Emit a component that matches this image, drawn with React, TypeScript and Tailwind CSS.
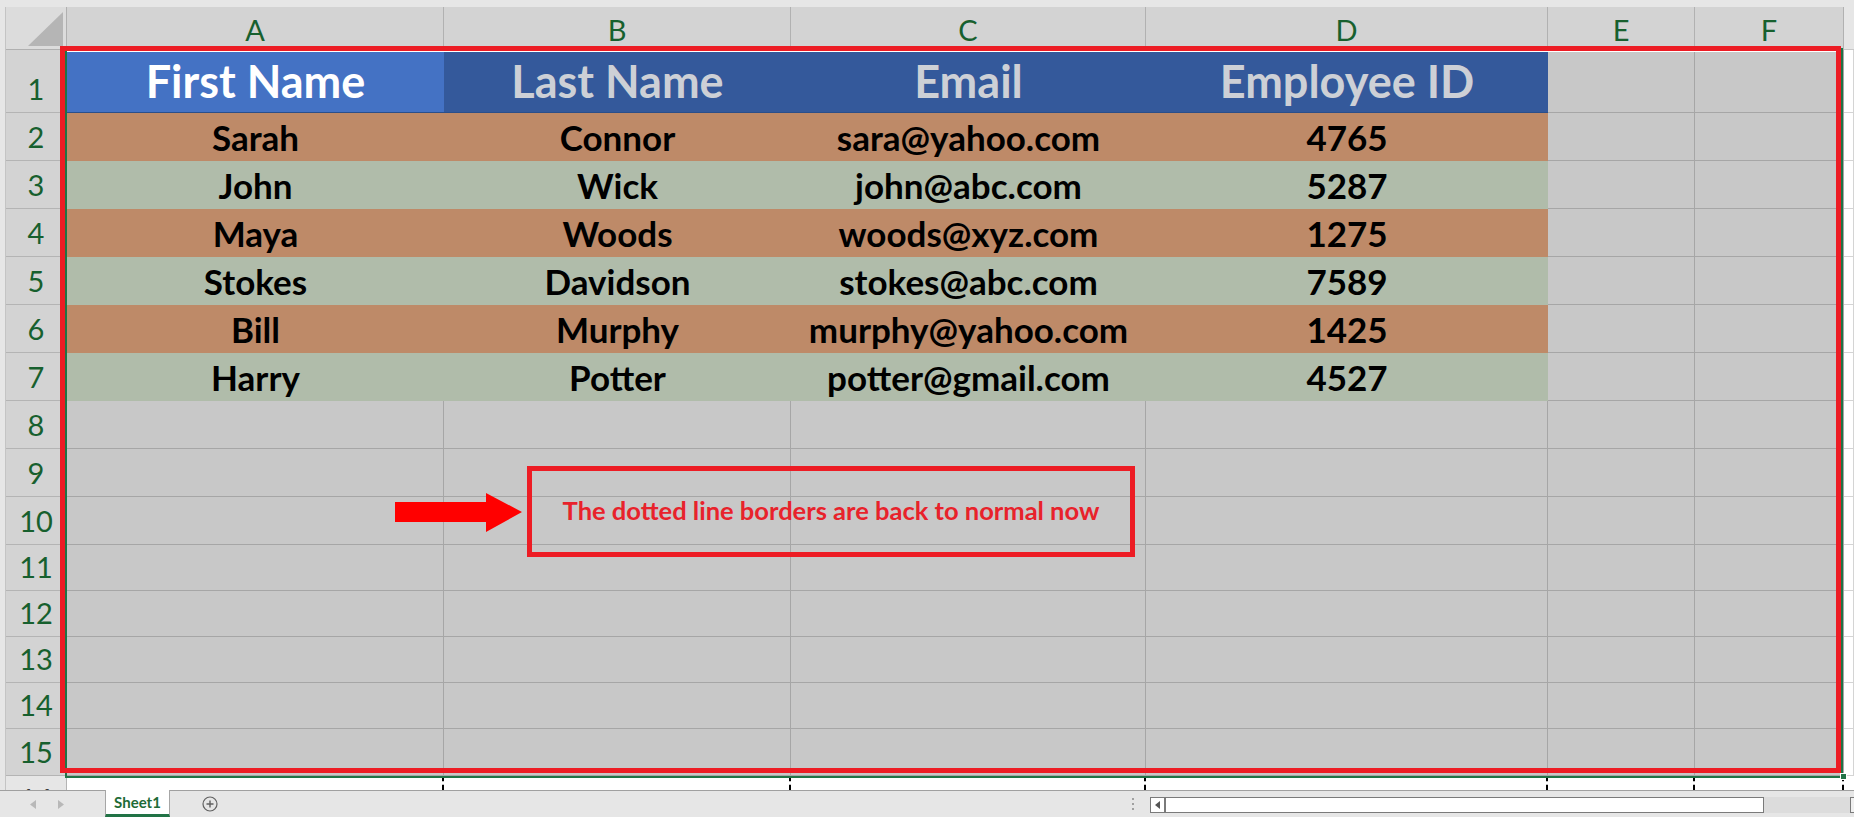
import React from "react";

const COLS = ["A", "B", "C", "D", "E", "F", "G"];

const DATA = [
  ["First Name", "Last Name", "Email", "Employee ID"],
  ["Sarah", "Connor", "sara@yahoo.com", "4765"],
  ["John", "Wick", "john@abc.com", "5287"],
  ["Maya", "Woods", "woods@xyz.com", "1275"],
  ["Stokes", "Davidson", "stokes@abc.com", "7589"],
  ["Bill", "Murphy", "murphy@yahoo.com", "1425"],
  ["Harry", "Potter", "potter@gmail.com", "4527"],
];

const ROW_NUMS = Array.from({ length: 16 }, (_, i) => i + 1);

function cellClass(row: number, col: number) {
  if (row === 16) return col < 6 ? "bg-white border-r-2 border-dashed border-black" : "bg-white";
  if (col === 6) return "bg-white border-r border-b border-[#d4d4d4]";
  if (row === 1 && col === 0) return "bg-[#4472c4] text-white text-[45px] border-b border-[#2b4f8a]";
  if (row === 1 && col < 4) return "bg-[#34599b] text-[#cdd0d6] text-[45px] border-b border-[#2b4f8a]";
  if (row <= 7 && col < 4)
    return row % 2 === 0 ? "bg-[#be8a68] text-black text-[35px]" : "bg-[#b0bcaa] text-black text-[35px]";
  return "bg-[#c8c8c8] border-r border-b border-[#a6a6a6]";
}

const App = () => {
  return (
    <div className="relative w-[1854px] h-[817px] overflow-hidden bg-[#e6e6e6] font-['Lato',sans-serif] flex flex-col">
      <div className="h-[7px] shrink-0 bg-[#e6e6e6]"></div>

      <div className="h-[783px] shrink-0 pl-[5px] bg-[#e6e6e6]">
        <div className="grid h-full grid-cols-[61px_377px_347px_355px_402px_147px_149px_1fr] grid-rows-[43px_63px_repeat(9,48px)_repeat(4,46px)_47px_14px] border-l border-[#c4c4c4]">
          {/* corner */}
          <div className="bg-[#dcdcdc] border-r border-b border-[#b0b0b0] relative">
            <svg width="61" height="43" className="absolute top-0 left-0">
              <polygon points="22,39 57,5 57,39" fill="#b5b5b5" />
            </svg>
          </div>
          {COLS.map((c, i) => (
            <div
              key={c}
              className={
                i < 6
                  ? "bg-[#d3d3d3] border-r border-b border-[#b1b1b1] flex items-center justify-center pt-[4px] text-[29px] text-[#17602e]"
                  : "bg-[#e6e6e6] border-b border-[#c8c8c8]"
              }
            >
              {i < 6 ? c : ""}
            </div>
          ))}

          {ROW_NUMS.map((r) => (
            <React.Fragment key={r}>
              <div
                className={
                  r < 16
                    ? "bg-[#d3d3d3] border-r border-b border-[#b4b4b4] flex items-end justify-center pb-[9px] leading-none text-[29px] text-[#17602e]"
                    : "bg-[#e6e6e6] border-r border-[#b4b4b4] overflow-hidden"
                }
              >
                {r < 16 ? (
                  r
                ) : (
                  <div className="h-[46px] flex items-center justify-center text-[29px] text-[#3a3a3a]">16</div>
                )}
              </div>
              {COLS.map((c, ci) => (
                <div key={c} className={`${cellClass(r, ci)} flex items-center justify-center font-bold leading-none`}>
                  {r <= 7 && ci < 4 ? DATA[r - 1][ci] : ""}
                </div>
              ))}
            </React.Fragment>
          ))}
        </div>
      </div>

      {/* sheet tabs + scrollbar */}
      <div className="h-[27px] shrink-0 flex bg-[#e6e6e6] border-t border-[#a0a0a0]">
        <div className="w-[105px] flex items-center pl-[30px] gap-[22px]">
          <svg width="6" height="9" viewBox="0 0 6 9">
            <polygon points="6,0 6,9 0,4.5" fill="#b8b8b8" />
          </svg>
          <svg width="6" height="9" viewBox="0 0 6 9">
            <polygon points="0,0 0,9 6,4.5" fill="#b8b8b8" />
          </svg>
        </div>
        <div className="w-[65px] -mt-px bg-white border-x border-[#a6a6a6] border-b-[3px] border-b-[#217346] flex items-center justify-center text-[15px] font-bold text-[#1d6b36]">
          Sheet1
        </div>
        <div className="w-[32px]"></div>
        <div className="w-[16px] flex items-center">
          <svg width="16" height="16" viewBox="0 0 16 16">
            <circle cx="8" cy="8" r="7" fill="none" stroke="#606060" strokeWidth="1.2" />
            <path d="M8 4.5v7M4.5 8h7" stroke="#606060" strokeWidth="1.4" />
          </svg>
        </div>
        <div className="flex-1"></div>
        <div className="w-[10px] flex flex-col items-center justify-center gap-[3px]">
          <span className="w-[2px] h-[2px] bg-[#a0a0a0]"></span>
          <span className="w-[2px] h-[2px] bg-[#a0a0a0]"></span>
          <span className="w-[2px] h-[2px] bg-[#a0a0a0]"></span>
        </div>
        <div className="w-[12px]"></div>
        <div className="w-[614px] h-[16px] mt-[6px] bg-white border border-[#7a7a7a] flex">
          <div className="w-[15px] border-r-2 border-[#7a7a7a] flex items-center justify-center">
            <svg width="5" height="8" viewBox="0 0 5 8">
              <polygon points="5,0 5,8 0,4" fill="#555" />
            </svg>
          </div>
        </div>
        <div className="w-[86px] h-[16px] mt-[6px] bg-[#dcdcdc]"></div>
        <div className="w-[4px] h-[16px] mt-[6px] border-l border-y border-[#7a7a7a] bg-[#f0f0f0]"></div>
      </div>

      {/* selection outline */}
      <div className="absolute left-[65px] top-[48px] w-[1778px] h-[730px] border-2 border-[#217346]"></div>
      <div className="absolute left-[1840px] top-[773px] w-[7px] h-[7px] bg-[#217346] border border-white"></div>

      {/* red highlight frame */}
      <div className="absolute left-[60px] top-[46px] w-[1781px] h-[727px] border-[5px] border-[#ed1c24]"></div>
      <div className="absolute left-[67px] top-[51px] w-[1769px] h-px bg-white"></div>

      {/* note */}
      <svg className="absolute left-[395px] top-[492px]" width="128" height="42" viewBox="0 0 128 42">
        <polygon points="0,10 91,10 91,1 127,20 91,40 91,30 0,30" fill="#ff0000" />
      </svg>
      <div className="absolute left-[527px] top-[466px] w-[608px] h-[91px] border-[5px] border-[#ed1c24] flex items-center justify-center pb-[3px] text-[25.5px] font-bold text-[#e8222b]">
        The dotted line borders are back to normal now
      </div>
    </div>
  );
};

export default App;
